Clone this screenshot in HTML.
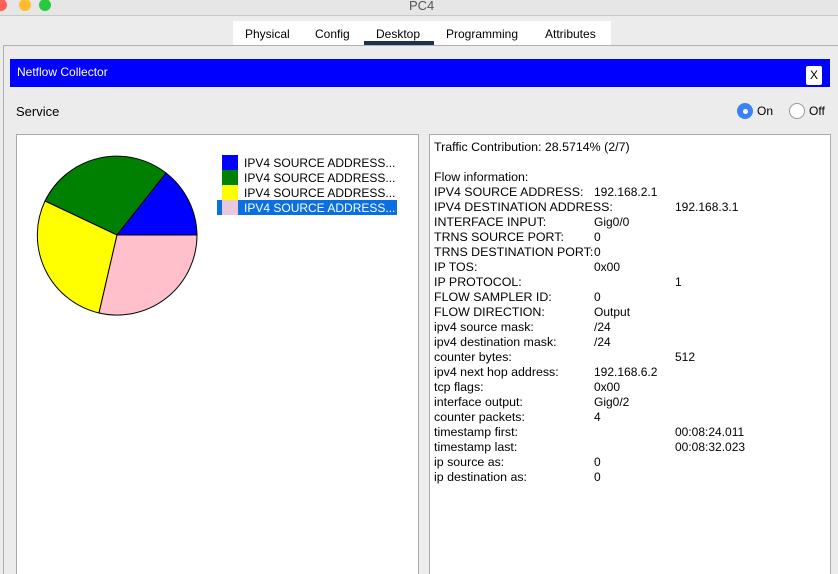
<!DOCTYPE html><html style="overflow:hidden;height:574px"><head><style>
body{margin:0;width:838px;height:574px;overflow:hidden;background:#ececec;font-family:"Liberation Sans",sans-serif;font-size:12px;color:#000;position:relative}
.a{position:absolute;white-space:nowrap}
.t{font-size:12.4px}
</style></head><body>
<div class="a" style="left:0;top:0;width:838px;height:15px;background:#e6e6e6;border-bottom:1px solid #c8c8c8"></div>
<div class="a" style="left:-5px;top:-1px;width:12px;height:12px;border-radius:50%;background:#fe5f57"></div>
<div class="a" style="left:19px;top:-1px;width:12px;height:12px;border-radius:50%;background:#febc2e"></div>
<div class="a" style="left:39px;top:-1px;width:12px;height:12px;border-radius:50%;background:#28c840"></div>
<div class="a" style="left:409px;top:-2px;font-size:13px;color:#555">PC4</div>
<div class="a" style="left:3px;top:45px;width:835px;height:529px;border-top:1px solid #b0b0b0;border-left:1px solid #b0b0b0"></div>
<div class="a" style="left:233px;top:21px;width:378px;height:24px;background:#fff"></div>
<div class="a" style="left:245px;top:27px">Physical</div>
<div class="a" style="left:315px;top:27px">Config</div>
<div class="a" style="left:376px;top:27px">Desktop</div>
<div class="a" style="left:364px;top:41px;width:70px;height:4px;background:#1a3350"></div>
<div class="a" style="left:446px;top:27px">Programming</div>
<div class="a" style="left:545px;top:27px">Attributes</div>
<div class="a" style="left:10px;top:59px;width:820px;height:28px;background:#0000ff"></div>
<div class="a" style="left:17px;top:65px;color:#fff">Netflow Collector</div>
<div class="a" style="left:806px;top:66px;width:16px;height:19px;background:#fff;border-radius:2px;text-align:center;line-height:19px">X</div>
<div class="a" style="left:16px;top:104px;font-size:13px">Service</div>
<div class="a" style="left:737px;top:103px;width:16px;height:16px;border-radius:50%;background:#3b82f6"></div>
<div class="a" style="left:743px;top:109px;width:5px;height:5px;border-radius:50%;background:#fff"></div>
<div class="a" style="left:757px;top:104px">On</div>
<div class="a" style="left:789px;top:103px;width:14px;height:14px;border-radius:50%;background:#fff;border:1px solid #999"></div>
<div class="a" style="left:809px;top:104px">Off</div>
<div class="a" style="left:16px;top:134px;width:401px;height:445px;background:#fff;border:1px solid #aaa"></div>
<div class="a" style="left:429px;top:134px;width:400px;height:445px;background:#fff;border:1px solid #aaa"></div>
<svg class="a" style="left:0;top:0" width="430" height="330">
<path d="M117 235 L197 235 A80 80 0 0 0 166 173 Z" fill="#0000ff" stroke="#000" stroke-width="1"/>
<path d="M117 235 L166 173 A80 80 0 0 0 45 201 Z" fill="#008000" stroke="#000" stroke-width="1"/>
<path d="M117 235 L45 201 A80 80 0 0 0 99 313 Z" fill="#ffff00" stroke="#000" stroke-width="1"/>
<path d="M117 235 L99 313 A80 80 0 0 0 197 235 Z" fill="#ffc0cb" stroke="#000" stroke-width="1"/>
</svg>
<div class="a" style="left:217px;top:200px;width:180px;height:15px;background:#0a6fe0"></div>
<div class="a" style="left:222px;top:155px;width:16px;height:15px;background:#0000ff"></div>
<div class="a" style="left:222px;top:170px;width:16px;height:15px;background:#008000"></div>
<div class="a" style="left:222px;top:185px;width:16px;height:15px;background:#ffff00"></div>
<div class="a" style="left:222px;top:200px;width:16px;height:15px;background:#e8c8dc"></div>
<div class="a" style="left:244px;top:156px">IPV4 SOURCE ADDRESS...</div>
<div class="a" style="left:244px;top:171px">IPV4 SOURCE ADDRESS...</div>
<div class="a" style="left:244px;top:186px">IPV4 SOURCE ADDRESS...</div>
<div class="a" style="left:244px;top:201px;color:#fff">IPV4 SOURCE ADDRESS...</div>
<div class="a t" style="left:434px;top:140px;line-height:15px">Traffic Contribution: 28.5714% (2/7)<br><br>Flow information:<br>IPV4 SOURCE ADDRESS:<br>IPV4 DESTINATION ADDRESS:<br>INTERFACE INPUT:<br>TRNS SOURCE PORT:<br>TRNS DESTINATION PORT:<br>IP TOS:<br>IP PROTOCOL:<br>FLOW SAMPLER ID:<br>FLOW DIRECTION:<br>ipv4 source mask:<br>ipv4 destination mask:<br>counter bytes:<br>ipv4 next hop address:<br>tcp flags:<br>interface output:<br>counter packets:<br>timestamp first:<br>timestamp last:<br>ip source as:<br>ip destination as:</div>
<div class="a" style="left:594px;top:185px;line-height:15px">192.168.2.1<br><br>Gig0/0<br>0<br>0<br>0x00<br><br>0<br>Output<br>/24<br>/24<br><br>192.168.6.2<br>0x00<br>Gig0/2<br>4<br><br><br>0<br>0</div>
<div class="a" style="left:675px;top:200px;line-height:15px">192.168.3.1<br><br><br><br><br>1<br><br><br><br><br>512<br><br><br><br><br>00:08:24.011<br>00:08:32.023</div>
</body></html>
